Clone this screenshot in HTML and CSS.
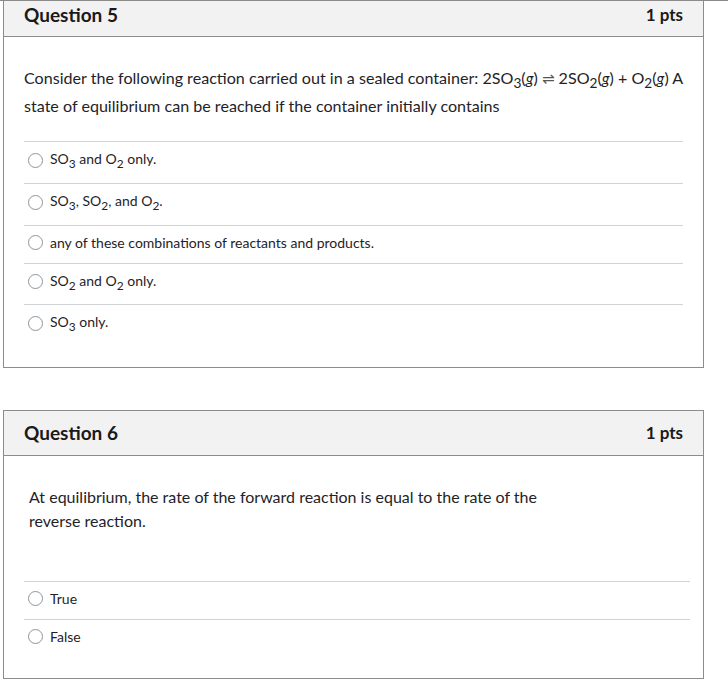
FILE: index.html
```html
<!DOCTYPE html>
<html lang="en">
<head>
<meta charset="utf-8">
<title>Quiz</title>
<link rel="stylesheet" href="styles.css">
</head>
<body>
<div class="topline"></div>
<section class="card card--cut">
  <header class="card-head">
    <h2 class="q-title">Question 5</h2>
    <span class="q-pts">1 pts</span>
  </header>
  <div class="card-body">
    <p class="q-text">Consider the following reaction carried out in a sealed container: 2SO<sub>3</sub>(<i>g</i>) <span class="arrow">⇌</span> 2SO<sub>2</sub>(<i>g</i>) + O<sub>2</sub>(<i>g</i>) A state of equilibrium can be reached if the container initially contains</p>
    <ul class="answers">
      <li class="answer"><span class="radio"></span><span>SO<sub>3</sub> and O<sub>2</sub> only.</span></li>
      <li class="answer"><span class="radio"></span><span>SO<sub>3</sub>, SO<sub>2</sub>, and O<sub>2</sub>.</span></li>
      <li class="answer"><span class="radio"></span><span>any of these combinations of reactants and products.</span></li>
      <li class="answer"><span class="radio"></span><span>SO<sub>2</sub> and O<sub>2</sub> only.</span></li>
      <li class="answer"><span class="radio"></span><span>SO<sub>3</sub> only.</span></li>
    </ul>
  </div>
</section>

<section class="card card--second">
  <header class="card-head">
    <h2 class="q-title">Question 6</h2>
    <span class="q-pts">1 pts</span>
  </header>
  <div class="card-body">
    <p class="q-text q-text--narrow">At equilibrium, the rate of the forward reaction is equal to the rate of the reverse reaction.</p>
    <ul class="answers answers--wide">
      <li class="answer"><span class="radio"></span><span>True</span></li>
      <li class="answer"><span class="radio"></span><span>False</span></li>
    </ul>
  </div>
</section>
</body>
</html>
```

FILE: styles.css
```css
html, body {
  margin: 0;
  padding: 0;
  background: #ffffff;
}
body {
  font-family: Lato, "Liberation Sans", sans-serif;
  color: #1f2327;
  overflow: hidden;
}
.topline {
  height: 1px;
  background: #8a8a8a;
}
.card {
  margin-left: 3px;
  width: 701px;
  box-sizing: border-box;
  border: 1px solid #8c8c8c;
  background: #fff;
}
.card--cut {
  border-top: none;
}
.card--second {
  margin-top: 42px;
}
.card-head {
  display: flex;
  justify-content: space-between;
  align-items: center;
  background: #f2f2f2;
  border-bottom: 1px solid #8c8c8c;
  padding: 10px 20px 10px 20px;
}
.card--cut .card-head {
  padding-top: 2px;
  padding-bottom: 9px;
}
.q-title {
  margin: 0;
  font-size: 19px;
  line-height: 24px;
  font-weight: 700;
  color: #1a1a1a;
}
.q-pts {
  font-size: 17px;
  line-height: 24px;
  font-weight: 700;
  color: #1a1a1a;
}
.card-body {
  padding: 27px 20px 21px 20px;
}
.q-text {
  margin: 0 0 21px 0;
  font-size: 16.1px;
  line-height: 28px;
}
.q-text sub {
  line-height: 0;
}
.q-text--narrow {
  margin: 0 0 48px 5px;
  max-width: 535px;
  font-size: 16px;
  line-height: 24px;
}
.card--second .card-body {
  padding-top: 29px;
}
sub {
  font-size: 0.85em;
  vertical-align: sub;
  line-height: normal;
}
i {
  font-style: italic;
}
.arrow {
  font-family: "DejaVu Sans", sans-serif;
  font-size: 15px;
  line-height: 1;
  color: #555;
}
.answers {
  list-style: none;
  margin: 0;
  padding: 0;
}
.answers--wide {
  margin-right: -7px;
}
.answer {
  display: flex;
  align-items: center;
  gap: 7px;
  border-top: 1px solid #cfd3d6;
  padding: 8px 0 12px 4px;
  font-size: 14px;
  line-height: 17px;
}
.card--second .answer {
  padding-top: 8px;
  padding-bottom: 12px;
}
.radio {
  flex: none;
  width: 13px;
  height: 13px;
  border: 1px solid #8e959b;
  border-radius: 50%;
  background: #fff;
}
```
